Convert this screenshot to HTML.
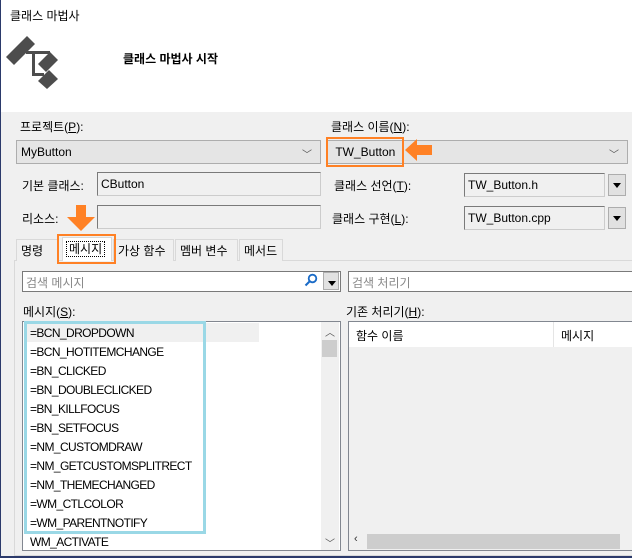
<!DOCTYPE html>
<html><head><meta charset="utf-8"><style>
*{box-sizing:border-box;margin:0;padding:0}
body{width:632px;height:558px;overflow:hidden;background:#f0f0f0;font-family:"Liberation Sans","Noto Sans CJK KR",sans-serif;font-size:12px;color:#000;position:relative}
.a{position:absolute}
.win{position:absolute;left:0;top:0;width:632px;height:558px;border-left:1px solid #2b3a6b;border-bottom:2px solid #2b3a6b}
.hdr{position:absolute;left:1px;top:0;width:631px;height:112px;background:#fff}
.combo{position:absolute;background:#e5e5e5;border:1px solid #adadad;height:24px;padding:4px 0 0 4px}
.combo .ch{position:absolute;right:8px;top:5px;font-size:10px;color:#555}
.edit{position:absolute;background:#f0f0f0;border:1px solid #7a7a7a;border-right-color:#ccc;border-bottom-color:#ccc;height:24px;padding:4px 0 0 3px}
.dd{position:absolute;width:18px;height:22px;background:#e1e1e1;border:1px solid #adadad}
.dd:after{content:"";position:absolute;left:4px;top:8px;border-left:4px solid transparent;border-right:4px solid transparent;border-top:5px solid #000}
.tab{position:absolute;top:239px;height:22px;background:#f0f0f0;border:1px solid #d9d9d9;border-bottom:none;padding:2px 0 0 4px}
.row{position:absolute;left:30px;height:19px;letter-spacing:-0.6px}
</style></head><body>
<div class="hdr"></div>
<div class="win"></div>
<div class="a" style="left:10px;top:7px">클래스 마법사</div>
<svg class="a" style="left:0;top:30px" width="70" height="65" viewBox="0 30 70 65">
<g fill="#4d4d4d">
<polygon points="6,57 27,36 35,44 14,65"/>
<polygon points="38,64 50,52 58,60 46,72"/>
<polygon points="38,81 49,70 58,79 47,89"/>
<rect x="26" y="51" width="24" height="3"/>
<rect x="32" y="51" width="3" height="25"/>
<rect x="32" y="73" width="12" height="3"/>
</g></svg>
<div class="a" style="left:123px;top:50px;font-weight:bold">클래스 마법사 시작</div>

<div class="a" style="left:20px;top:118px">프로젝트(<u>P</u>):</div>
<div class="combo" style="left:16px;top:140px;width:305px">MyButton<span class="ch">﹀</span></div>
<div class="a" style="left:331px;top:118px">클래스 이름(<u>N</u>):</div>
<div class="combo" style="left:327px;top:140px;width:301px">&nbsp;TW_Button<span class="ch">﹀</span></div>
<div class="a" style="left:326px;top:137px;width:78px;height:30px;border:2px solid #ff8125"></div>
<svg class="a" style="left:404px;top:138px" width="30" height="24"><polygon points="1,12 13,1 13,7 28,7 28,17 13,17 13,23" fill="#ff8125"/></svg>

<div class="a" style="left:22px;top:177px">기본 클래스:</div>
<div class="edit" style="left:97px;top:172px;width:224px">CButton</div>
<div class="a" style="left:334px;top:177px">클래스 선언(<u>T</u>):</div>
<div class="edit" style="left:464px;top:173px;width:141px">TW_Button.h</div>
<div class="dd" style="left:608px;top:174px"></div>

<div class="a" style="left:22px;top:210px">리소스:</div>
<div class="edit" style="left:97px;top:205px;width:224px"></div>
<div class="a" style="left:332px;top:210px">클래스 구현(<u>L</u>):</div>
<div class="edit" style="left:464px;top:206px;width:141px">TW_Button.cpp</div>
<div class="dd" style="left:608px;top:207px"></div>
<svg class="a" style="left:67px;top:204px" width="30" height="28"><polygon points="9,1 19,1 19,13 28,13 14,27 0,13 9,13" fill="#ff8125"/></svg>

<div class="a" style="left:14px;top:260px;width:618px;height:296px;border:1px solid #d9d9d9;border-right:none;background:#f0f0f0"></div>
<div class="tab" style="left:16px;width:42px">명령</div>
<div class="tab" style="left:62px;top:237px;height:24px;width:50px;background:#fff;border-bottom:none"><span style="outline:1px dotted #000;padding:0 2px">메시지</span></div>
<div class="tab" style="left:113px;width:61px">가상 함수</div>
<div class="tab" style="left:175px;width:63px">멤버 변수</div>
<div class="tab" style="left:239px;width:44px">메서드</div>
<div class="a" style="left:57px;top:234px;width:59px;height:30px;border:2px solid #ff8125"></div>

<div class="a" style="left:22px;top:271px;width:319px;height:21px;background:#fff;border:1px solid #7a7a7a;padding:2px 0 0 3px;color:#888">검색 메시지</div>
<svg class="a" style="left:304px;top:273px" width="14" height="14"><circle cx="8.5" cy="5.5" r="3.8" fill="none" stroke="#1a6bc7" stroke-width="1.8"/><line x1="6" y1="8" x2="1.5" y2="12.5" stroke="#1a6bc7" stroke-width="2"/></svg>
<div class="dd" style="left:323px;top:272px;width:16px;height:18px"></div>
<div class="a" style="left:348px;top:271px;width:284px;height:21px;background:#fff;border:1px solid #7a7a7a;border-right:none;padding:2px 0 0 3px;color:#888">검색 처리기</div>

<div class="a" style="left:23px;top:303px">메시지(<u>S</u>):</div>
<div class="a" style="left:346px;top:303px">기존 처리기(<u>H</u>):</div>

<div class="a" style="left:22px;top:321px;width:319px;height:230px;background:#fff;border:1px solid #828790"></div>
<div class="a" style="left:27px;top:323px;width:232px;height:19px;background:#f0f0f0"></div>
<div class="a" style="left:321px;top:322px;width:18px;height:228px;background:#f0f0f0"></div>
<div class="a" style="left:322px;top:340px;width:15px;height:17px;background:#cdcdcd"></div>
<div class="a" style="left:325px;top:324px;font-size:10px;color:#555">︿</div>
<div class="a" style="left:325px;top:535px;font-size:10px;color:#555">﹀</div>
<div class="row" style="top:326px">=BCN_DROPDOWN</div>
<div class="row" style="top:345px">=BCN_HOTITEMCHANGE</div>
<div class="row" style="top:364px">=BN_CLICKED</div>
<div class="row" style="top:383px">=BN_DOUBLECLICKED</div>
<div class="row" style="top:402px">=BN_KILLFOCUS</div>
<div class="row" style="top:421px">=BN_SETFOCUS</div>
<div class="row" style="top:440px">=NM_CUSTOMDRAW</div>
<div class="row" style="top:459px">=NM_GETCUSTOMSPLITRECT</div>
<div class="row" style="top:478px">=NM_THEMECHANGED</div>
<div class="row" style="top:497px">=WM_CTLCOLOR</div>
<div class="row" style="top:516px">=WM_PARENTNOTIFY</div>
<div class="row" style="top:535px">WM_ACTIVATE</div>
<div class="a" style="left:24px;top:321px;width:182px;height:213px;border:3px solid #9ad8e6"></div>

<div class="a" style="left:348px;top:321px;width:284px;height:230px;background:#f0f0f0;border:1px solid #828790;border-right:none"></div>
<div class="a" style="left:349px;top:322px;width:283px;height:25px;background:#fff"></div>
<div class="a" style="left:553px;top:322px;width:1px;height:25px;background:#e5e5e5"></div>
<div class="a" style="left:356px;top:327px">함수 이름</div>
<div class="a" style="left:561px;top:327px">메시지</div>
<div class="a" style="left:349px;top:533px;width:283px;height:17px;background:#f0f0f0"></div>
<div class="a" style="left:367px;top:534px;width:253px;height:15px;background:#cdcdcd"></div>
<div class="a" style="left:354px;top:533px;font-size:11px;color:#333">‹</div>
</body></html>
